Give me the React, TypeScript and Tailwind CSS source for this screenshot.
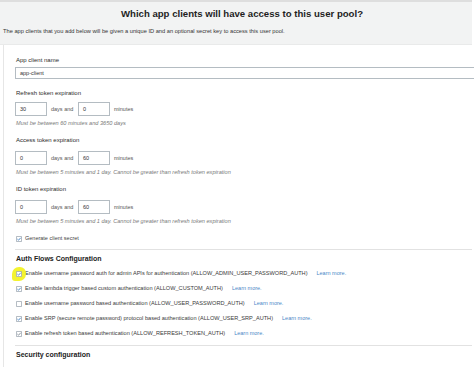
import type { ReactNode } from "react"

type Flow = { text: string; checked: boolean; disabled?: boolean; marked?: boolean }

const flows: Flow[] = [
    { text: "Enable username password auth for admin APIs for authentication (ALLOW_ADMIN_USER_PASSWORD_AUTH)", checked: true, marked: true },
    { text: "Enable lambda trigger based custom authentication (ALLOW_CUSTOM_AUTH)", checked: true },
    { text: "Enable username password based authentication (ALLOW_USER_PASSWORD_AUTH)", checked: false },
    { text: "Enable SRP (secure remote password) protocol based authentication (ALLOW_USER_SRP_AUTH)", checked: true },
    { text: "Enable refresh token based authentication (ALLOW_REFRESH_TOKEN_AUTH)", checked: true, disabled: true },
]

function Checkbox({ checked, disabled }: { checked: boolean; disabled?: boolean }) {
    return (
        <svg width="6" height="6" viewBox="0 0 12 12" className="shrink-0">
            <rect x="0.75" y="0.75" width="10.5" height="10.5" rx="1" fill="#fff" stroke="#8f9aa6" strokeWidth="1.5" />
            {checked && (
                <path
                    d="M2.8 6.2 L5 8.4 L9.4 3.6"
                    fill="none"
                    stroke={disabled ? "#7d8791" : "#3d7fc4"}
                    strokeWidth="1.8"
                />
            )}
        </svg>
    )
}

function Label({ children, className = "" }: { children: ReactNode; className?: string }) {
    return <div className={`h-[7px] leading-[7px] text-[6px] text-[#2b2b2b] ${className}`}>{children}</div>
}

function Helper({ children }: { children: ReactNode }) {
    return <div className="mt-[4px] h-[6px] leading-[6px] text-[5.6px] italic text-[#7a7a7a] ml-[1px]">{children}</div>
}

function SmallInput({ value }: { value: string }) {
    return (
        <div className="w-[32px] h-[14px] border border-[#b4bcc2] bg-white pl-[4px] flex items-center text-[5.5px] text-[#333]">
            {value}
        </div>
    )
}

function Duration({ days, minutes, className = "" }: { days: string; minutes: string; className?: string }) {
    return (
        <div className={`flex items-center ${className}`}>
            <SmallInput value={days} />
            <span className="ml-[4px] w-[27px] text-[5.5px] text-[#555]">days and</span>
            <SmallInput value={minutes} />
            <span className="ml-[4px] text-[5.5px] text-[#555]">minutes</span>
        </div>
    )
}

export default function App() {
    return (
        <div className="w-[474px] h-[367px] overflow-hidden bg-white font-['Liberation_Sans',Arial,sans-serif] pr-[2px]">
            <div className="h-[45px] bg-[#f2f3f3] border-t-2 border-[#dedede] border-b border-b-[#e9eaea] pt-[6px]">
                <h1 className="h-[12px] leading-[12px] text-center pl-[12px] text-[9.6px] font-bold text-[#1e1e1e]">
                    Which app clients will have access to this user pool?
                </h1>
                <p className="mt-[8px] ml-[3px] h-[7px] leading-[7px] text-[5.7px] text-[#333] whitespace-nowrap">
                    The app clients that you add below will be given a unique ID and an optional secret key to access this user pool.
                </p>
            </div>

            <div className="ml-[3px] border-l border-[#e6e6e6] pl-[11px] pt-[12px] pb-[20px]">
                <Label className="ml-[1px]">App client name</Label>
                <div className="mt-[3px] h-[12px] w-[470px] border border-[#b4bcc2] pl-[4px] flex items-center text-[5.5px] text-[#333]">
                    app-client
                </div>

                <Label className="mt-[11px] ml-[1px]">Refresh token expiration</Label>
                <Duration days="30" minutes="0" className="mt-[5px]" />
                <Helper>Must be between 60 minutes and 3650 days</Helper>

                <Label className="mt-[11px] ml-[1px]">Access token expiration</Label>
                <Duration days="0" minutes="60" className="mt-[7px]" />
                <Helper>Must be between 5 minutes and 1 day. Cannot be greater than refresh token expiration</Helper>

                <Label className="mt-[11px] ml-[1px]">ID token expiration</Label>
                <Duration days="0" minutes="60" className="mt-[7px]" />
                <Helper>Must be between 5 minutes and 1 day. Cannot be greater than refresh token expiration</Helper>

                <div className="mt-[11px] h-[7px] flex items-center gap-[3px] ml-[1px]">
                    <Checkbox checked />
                    <span className="text-[5.5px] text-[#444]">Generate client secret</span>
                </div>

                <div className="mt-[7px] border-t border-[#e2e2e2]" />

                <div className="mt-[4px] h-[9px] leading-[9px] ml-[1px] text-[7px] font-bold text-[#222]">
                    Auth Flows Configuration
                </div>

                <div className="mt-[7px] flex flex-col gap-[8px] ml-[1px]">
                    {flows.map((f) => (
                        <div key={f.text} className="h-[7px] flex items-center">
                            <div className="relative flex">
                                {f.marked && (
                                    <div className="absolute left-[-4px] top-[-4px] w-[14px] h-[14px] rounded-[7px_6px_7px_3px] bg-[#f2f21a] opacity-90" />
                                )}
                                <div className="relative">
                                    <Checkbox checked={f.checked} disabled={f.disabled} />
                                </div>
                            </div>
                            <span className="ml-[3px] text-[5.6px] text-[#3a3a3a] whitespace-nowrap">{f.text}</span>
                            <span className="ml-[9px] text-[5.5px] text-[#4a88c7] whitespace-nowrap">Learn more.</span>
                        </div>
                    ))}
                </div>

                <div className="mt-[8px] border-t border-[#e2e2e2]" />

                <div className="mt-[4px] h-[9px] leading-[9px] ml-[1px] text-[7px] font-bold text-[#222]">
                    Security configuration
                </div>
            </div>
        </div>
    )
}
